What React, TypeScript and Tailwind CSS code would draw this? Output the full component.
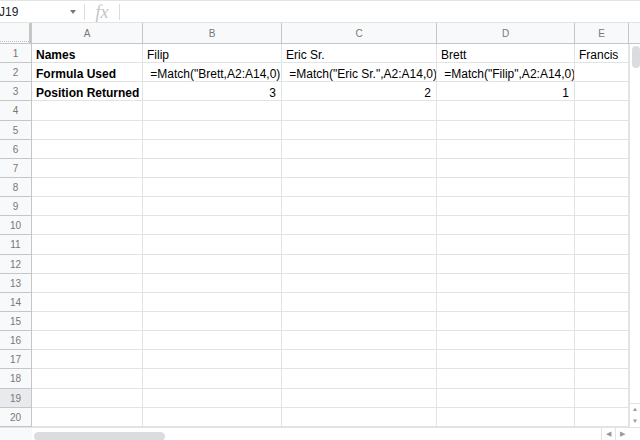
const cols = [
  { key: "A", w: "w-[111px]" },
  { key: "B", w: "w-[139px]" },
  { key: "C", w: "w-[155px]" },
  { key: "D", w: "w-[138px]" },
  { key: "E", w: "w-[54px]" },
];

type Cell = { text: string; bold?: boolean; right?: boolean };

const data: Record<number, Cell[]> = {
  1: [{ text: "Names", bold: true }, { text: "Filip" }, { text: "Eric Sr." }, { text: "Brett" }, { text: "Francis" }],
  2: [
    { text: "Formula Used", bold: true },
    { text: ' =Match("Brett,A2:A14,0)' },
    { text: ' =Match("Eric Sr.",A2:A14,0)' },
    { text: ' =Match("Filip",A2:A14,0)' },
    { text: "" },
  ],
  3: [
    { text: "Position Returned", bold: true },
    { text: "3", right: true },
    { text: "2", right: true },
    { text: "1", right: true },
    { text: "" },
  ],
};

const rows = Array.from({ length: 20 }, (_, i) => i + 1);

const App = () => {
  return (
    <div className="w-[640px] h-[440px] overflow-hidden bg-white flex flex-col font-['Liberation_Sans',Arial,sans-serif] text-[12px] text-black">
      {/* Formula bar */}
      <div className="h-[23px] shrink-0 flex items-center border-t border-b border-[#e3e3e3]">
        <div className="w-[85px] h-full flex items-center justify-between pr-[8px] -ml-[1px]">
          <span className="text-[12px] text-[#222]">J19</span>
          <span className="w-0 h-0 border-l-[3px] border-r-[3px] border-t-[4px] border-l-transparent border-r-transparent border-t-[#777] mt-[1px]" />
        </div>
        <div className="w-px h-[16px] bg-[#dadce0]" />
        <div className="w-[34px] flex justify-center">
          <span className="font-['Liberation_Serif',serif] italic text-[18px] text-[#c4c4c4] leading-none">fx</span>
        </div>
        <div className="w-px h-[16px] bg-[#dadce0]" />
      </div>

      {/* Grid */}
      <div className="flex flex-1 min-h-0">
        <div className="flex flex-col">
          {/* Column headers */}
          <div className="flex h-[21px] shrink-0 bg-[#f8f9fa] border-b border-[#c4c7c5]">
            <div className="relative w-[32px] h-full">
              <div className="absolute right-0 top-0 w-[3px] h-full bg-[#c4c7c5]" />
              <div className="absolute left-0 right-[3px] bottom-[1px] border-b border-dotted border-[#bbb]" />
            </div>
            {cols.map((c) => (
              <div
                key={c.key}
                className={`${c.w} h-full flex items-center justify-center border-r border-[#c4c7c5] text-[10px] text-[#777]`}
              >
                {c.key}
              </div>
            ))}
          </div>

          {rows.map((r) => (
            <div key={r} className="flex h-[19.15px] shrink-0">
              <div
                className={`w-[32px] h-full flex items-center justify-center pt-[1px] border-r border-b border-[#c4c7c5] text-[10px] text-[#777] ${
                  r === 19 ? "bg-[#e8eaed]" : "bg-[#f8f9fa]"
                }`}
              >
                {r}
              </div>
              {cols.map((c, ci) => {
                const cell = data[r]?.[ci];
                return (
                  <div
                    key={c.key}
                    className={`${c.w} h-full flex items-start pt-[5px] leading-none overflow-hidden whitespace-pre border-r border-b border-[#e2e3e3] ${
                      cell?.right ? "justify-end pr-[5px]" : "pl-[4px]"
                    } ${cell?.bold ? "font-bold" : ""}`}
                  >
                    {cell?.text}
                  </div>
                );
              })}
            </div>
          ))}
        </div>

        {/* Vertical scrollbar */}
        <div className="flex-1 flex flex-col">
          <div className="h-[21px] bg-[#f8f9fa] border-b border-[#c4c7c5] shrink-0" />
          <div className="flex-1 relative border-l border-[#e2e3e3]">
            <div className="absolute left-[2px] top-[2px] w-[8px] h-[22px] rounded-full bg-[#dadce0]" />
            <div className="absolute left-0 right-0 bottom-0 h-[24px] flex flex-col items-center justify-around text-[6px] text-[#999] border-t border-[#e2e3e3]">
              <span>▲</span>
              <span>▼</span>
            </div>
          </div>
        </div>
      </div>

      {/* Horizontal scrollbar */}
      <div className="h-[13px] shrink-0 flex border-t border-[#e2e3e3]">
        <div className="w-[32px] h-full bg-[#f8f9fa]" />
        <div className="flex-1 relative">
          <div className="absolute left-[2px] top-[4px] w-[131px] h-[9px] rounded-full bg-[#dadce0]" />
        </div>
        <div className="w-[28px] h-full flex border-l border-[#e2e3e3] text-[7px] text-[#999]">
          <div className="flex-1 flex items-center justify-center border-r border-[#e2e3e3]">◀</div>
          <div className="flex-1 flex items-center justify-center">▶</div>
        </div>
        <div className="w-[11px] h-full" />
      </div>
    </div>
  );
};

export default App;
